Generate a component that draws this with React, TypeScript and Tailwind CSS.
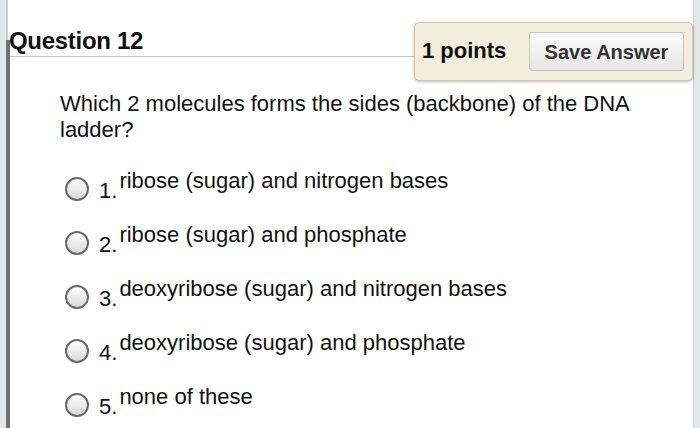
import React from "react";

const options = [
  "ribose (sugar) and nitrogen bases",
  "ribose (sugar) and phosphate",
  "deoxyribose (sugar) and nitrogen bases",
  "deoxyribose (sugar) and phosphate",
  "none of these",
];

export default function App() {
  return (
    <div
      className="w-[700px] h-[428px] overflow-hidden bg-[#dfe9e9] flex"
      style={{ fontFamily: '"Liberation Sans", Arial, sans-serif' }}
    >
      <div className="w-[6px] shrink-0" />
      <div className="relative flex-1 bg-white border-l-[2px] border-[#c8cccc] border-r border-r-[#c9cfcf] mr-[6px]">
        <div className="absolute left-[-2px] top-[40px] bottom-0 w-[4px] bg-[#6f7272]" />
        <div className="h-[57px] flex items-end border-b border-[#c9c9c9] mr-[278px]">
          <div className="pl-[1px] pb-[3px] text-[24px] font-bold text-[#111] leading-none tracking-[-0.3px]">
            Question 12
          </div>
        </div>
        <div className="absolute left-[406px] top-[22px] w-[279px] h-[59px] rounded-[5px] bg-[#f2eedb] border border-[#cfc8a8] shadow-[0_1px_3px_rgba(0,0,0,0.25)] flex items-center pl-[7px] pr-[8px]">
          <span className="text-[22px] font-bold text-[#111] relative top-[-1px]">1 points</span>
          <div className="ml-auto w-[155px] h-[39px] rounded-[3px] border border-[#c4c4c4] bg-gradient-to-b from-[#fbfbfb] to-[#e6e6e6] flex items-center justify-center text-[20px] font-bold text-[#333]">
            Save Answer
          </div>
        </div>
        <div className="pl-[52px] pt-[34px] text-[22px] leading-[26px] text-[#111]">
          Which 2 molecules forms the sides (backbone) of the DNA
          <br />
          ladder?
        </div>
        <div className="pl-[57px] pt-[33px] flex flex-col gap-[29px]">
          {options.map((o, i) => (
            <div key={i} className="flex items-center h-[25px]">
              <div className="w-[24px] h-[24px] rounded-full border-[2px] border-[#6a6a6a] bg-gradient-to-b from-[#ffffff] to-[#d9d9d9] shrink-0" />
              <span className="ml-[10px] text-[22px] text-[#111] relative top-[2px]">{i + 1}.</span>
              <span className="ml-[2px] text-[22px] text-[#111] relative top-[-8px]">{o}</span>
            </div>
          ))}
        </div>
      </div>
    </div>
  );
}
